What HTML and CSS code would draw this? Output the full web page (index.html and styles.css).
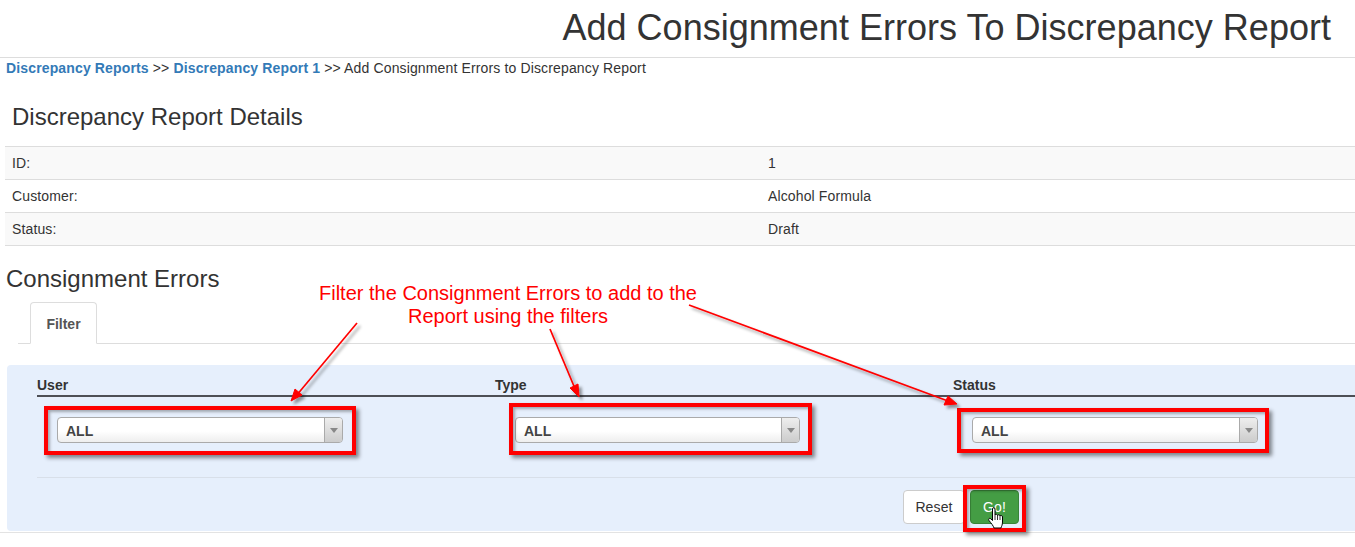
FILE: index.html
```html
<!DOCTYPE html>
<html lang="en">
<head>
<meta charset="utf-8">
<title>Add Consignment Errors To Discrepancy Report</title>
<link rel="stylesheet" href="styles.css">
</head>
<body>
<header class="page-header"><h1>Add Consignment Errors To Discrepancy Report</h1></header>
<nav class="crumbs"><a href="#">Discrepancy Reports</a> &gt;&gt; <a href="#">Discrepancy Report 1</a> &gt;&gt; Add Consignment Errors to Discrepancy Report</nav>
<h2 class="details-title">Discrepancy Report Details</h2>
<div class="details">
  <div class="row"><span>ID:</span><span>1</span></div>
  <div class="row"><span>Customer:</span><span>Alcohol Formula</span></div>
  <div class="row"><span>Status:</span><span>Draft</span></div>
</div>
<h2 class="errors-title">Consignment Errors</h2>
<div class="tabs"><div class="tab">Filter</div></div>
<section class="panel">
  <div class="fields">
    <div class="field"><div class="label">User</div><div class="select"><span class="value">ALL</span><span class="caret"></span></div></div>
    <div class="field"><div class="label">Type</div><div class="select"><span class="value">ALL</span><span class="caret"></span></div></div>
    <div class="field"><div class="label">Status</div><div class="select"><span class="value">ALL</span><span class="caret"></span></div></div>
  </div>
  <div class="actions">
    <button class="btn reset">Reset</button>
    <button class="btn go">Go!</button>
  </div>
</section>
<div class="panel-end"></div>

<div class="note">Filter the Consignment Errors to add to the<br>Report using the filters</div>
<div class="box box-user"></div>
<div class="box box-type"></div>
<div class="box box-status"></div>
<div class="box box-go"></div>
<svg class="arrows" width="1355" height="547" viewBox="0 0 1355 547">
  <defs>
    <filter id="sh" x="-20%" y="-20%" width="140%" height="140%"><feDropShadow dx="3" dy="3" stdDeviation="1.6" flood-color="#000" flood-opacity=".4"/></filter>
  </defs>
  <g filter="url(#sh)" fill="#f00" stroke="#f00">
    <path d="M357 323 L296 396" stroke-width="1.7" fill="none"/>
    <path d="M291 401 L295 389 L302 395 Z" stroke-width="1"/>
    <path d="M550 329 L576 391" stroke-width="1.7" fill="none"/>
    <path d="M579 397 L570 388 L578 384 Z" stroke-width="1"/>
    <path d="M689 305 L948 401" stroke-width="1.7" fill="none"/>
    <path d="M957 404 L944 405 L948 396 Z" stroke-width="1"/>
  </g>
</svg>
<svg class="hand" width="19" height="23" viewBox="-1 -1 19 23">
  <path d="M4.5 2C4.5.3 7 .3 7 2V8C7.5 7 9.5 7 9.5 8.5 10 7.5 12 7.5 12 9 12.5 8 14.5 8.3 14.5 10V15C14.5 18 13.5 19 13 21H6C5.5 19 3 16 1 13.5 0 12 1.5 10.5 3 12L4.5 13.5Z" fill="#fff" stroke="#000" stroke-width="1"/>
  <path d="M7 8V13M9.5 8.5V13M12 9V13" fill="none" stroke="#000" stroke-width=".8"/>
</svg>
</body>
</html>
```
FILE: styles.css
```css
* { box-sizing: border-box; }
html, body { margin: 0; padding: 0; height: 547px; overflow: hidden; background: #fff; }
body { position: relative; font-family: "Liberation Sans", Arial, sans-serif; font-size: 14px; color: #333; }

.page-header { height: 58px; border-bottom: 1px solid #ddd; padding: 8px 24px 0 0; text-align: right; }
.page-header h1 { margin: 0; font-size: 36px; line-height: 40px; font-weight: 400; letter-spacing: .02px; }

.crumbs { padding: 0 0 0 6px; line-height: 20px; height: 22px; letter-spacing: .14px; }
.crumbs a { color: #337ab7; font-weight: 700; text-decoration: none; }

.details-title { margin: 0; padding: 24px 0 0 12px; font-size: 24px; line-height: 26px; font-weight: 400; height: 66px; }

.details { margin-left: 5px; border-top: 1px solid #ddd; }
.row { display: grid; grid-template-columns: 756px 1fr; height: 33px; align-items: center; padding: 0 0 0 7px; border-bottom: 1px solid #ddd; line-height: 20px; letter-spacing: .13px; }
.row:nth-child(odd) { background: #f9f9f9; }

.errors-title { margin: 0; padding: 20px 0 0 6px; height: 55px; font-size: 24px; line-height: 26px; font-weight: 400; }

.tabs { margin-left: 18px; height: 43px; border-bottom: 1px solid #ddd; padding: 1px 0 0 12px; }
.tab { width: 67px; height: 42px; border: 1px solid #ddd; border-bottom: 1px solid #fff; border-radius: 4px 4px 0 0; background: #fff; text-align: center; line-height: 42px; font-weight: 700; color: #555; }

.panel { margin: 21px 0 0 7px; height: 166px; background: #e6effc; border-radius: 4px 0 0 4px; padding: 11px 0 0 30px; }
.fields { display: grid; grid-template-columns: repeat(3, 458px); height: 102px; border-bottom: 1px solid #d8dfe9; }
.field { display: block; }
.label { height: 21px; border-bottom: 2px solid #4d4f55; font-weight: 700; line-height: 18px; color: #333; }
.select { width: 286px; height: 26px; margin: 20px 0 0 20px; display: flex; align-items: center; border: 1px solid #aaa; border-radius: 4px; background: linear-gradient(#fff 55%, #eee); font-weight: 700; }
.field:nth-child(2) .select { width: 285px; }
.field:nth-child(3) .select { margin-left: 19px; }
.value { flex: 1; padding: 2px 0 0 8px; color: #444; line-height: 24px; }
.caret { width: 18px; height: 100%; position: relative; border-left: 1px solid #aaa; background: linear-gradient(#eee, #ccc); border-radius: 0 3px 3px 0; }
.caret::after { content: ""; position: absolute; left: 5px; top: 10px; border: 4px solid transparent; border-top: 5px solid #888; border-bottom: 0; }

.actions { display: flex; padding: 12px 0 0 866px; gap: 5px; }
.btn { height: 34px; border-radius: 4px; font: 14px/20px "Liberation Sans", Arial, sans-serif; padding: 0; letter-spacing: .13px; }
.reset { width: 62px; border: 1px solid #ccc; background: #fff; color: #333; }
.go { width: 49px; border: 1px solid #398439; background: #449d44; color: #fff; }

.panel-end { height: 1px; margin-top: 1px; background: #e3e3e3; }

.note { position: absolute; left: 300px; top: 282px; width: 416px; text-align: center; color: #f00; font-size: 20px; line-height: 23px; }
.box { position: absolute; border: 4px solid #f00; box-shadow: 3px 3px 4px rgba(0,0,0,.45), inset 2px 2px 3px rgba(0,0,0,.3); }
.box-user { left: 44px; top: 406px; width: 312px; height: 49px; }
.box-type { left: 509px; top: 403px; width: 303px; height: 52px; }
.box-status { left: 957px; top: 408px; width: 312px; height: 45px; }
.box-go { left: 963px; top: 485px; width: 63px; height: 47px; }
.arrows { position: absolute; left: 0; top: 0; pointer-events: none; }
.hand { position: absolute; left: 987px; top: 506px; }
```
